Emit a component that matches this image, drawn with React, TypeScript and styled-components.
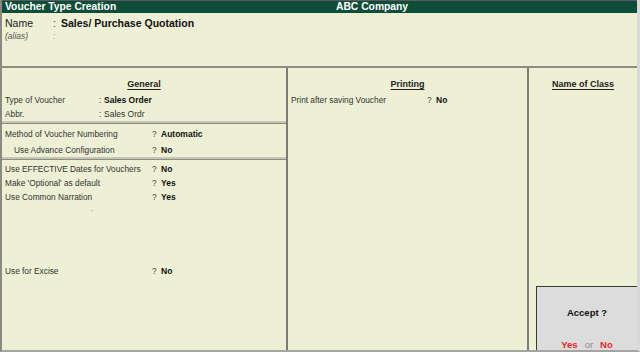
import styled, {createGlobalStyle} from 'styled-components'

const GlobalStyle = createGlobalStyle`
    html, body {
        margin: 0;
        padding: 0;
        background: #ffffff;
        overflow: hidden;
    }
    body {
        font-family: "Liberation Sans", Arial, sans-serif;
    }
`;

const Screen = styled.div`
    width: 640px;
    height: 352px;
    display: flex;
    flex-direction: column;
    box-sizing: border-box;
    background: #eef0d5;
    border-left: 2px solid #8a8a80;
    border-bottom: 2px solid #a4a4a0;
    border-right: 3px solid #d8d8d4;
    position: relative;
    overflow: hidden;
`;

const TitleBar = styled.div`
    height: 12px;
    display: flex;
    align-items: center;
    background: #0f4d3b;
    border-top: 1px solid #5a5a5a;
    color: #ffffff;
    font-weight: bold;
    font-size: 10.3px;
    line-height: 12px;
`;

const TitleText = styled.span<{ $width?: number }>`
    width: ${props => props.$width ? `${props.$width}px` : 'auto'};
    padding-left: 3px;
    white-space: nowrap;
`;

const NameSection = styled.div`
    height: 55px;
    padding: 3px 0 0 3px;
    box-sizing: border-box;
    border-bottom: 2px solid #8c8c80;
`;

const NameRow = styled.div<{ $small?: boolean }>`
    display: flex;
    align-items: center;
    height: ${props => props.$small ? 11 : 14}px;
    font-size: ${props => props.$small ? 8.5 : 10.5}px;
    color: ${props => props.$small ? '#555' : '#222'};
    font-style: ${props => props.$small ? 'italic' : 'normal'};
`;

const NameLabel = styled.span`
    width: 48px;
`;

const NameColon = styled.span<{ $faint?: boolean }>`
    width: 8px;
    color: ${props => props.$faint ? '#999' : '#444'};
`;

const NameValue = styled.span`
    font-weight: bold;
    font-size: 10.5px;
    color: #111;
`;

const Columns = styled.div`
    flex: 1;
    display: flex;
`;

const Column = styled.div<{ $width?: number }>`
    width: ${props => props.$width ? `${props.$width}px` : 'auto'};
    flex: ${props => props.$width ? 'none' : 1};
    display: flex;
    flex-direction: column;
    box-sizing: border-box;
    border-right: ${props => props.$width ? '2px solid #7c7c70' : 'none'};
    font-size: 8.3px;
    color: #333;
`;

const Heading = styled.div`
    margin-top: 9px;
    height: 14px;
    line-height: 14px;
    text-align: center;
    font-weight: bold;
    font-size: 9px;
    color: #222;
    span {
        text-decoration: underline;
        text-underline-offset: 2px;
    }
`;

const Block = styled.div<{ $top?: number, $line?: boolean }>`
    padding-top: ${props => props.$top ?? 0}px;
    border-bottom: ${props => props.$line ? '2px solid #c6c6b4' : 'none'};
    box-shadow: ${props => props.$line ? '0 1px 0 #8c8c80' : 'none'};
`;

const Row = styled.div<{ $height?: number, $indent?: number }>`
    height: ${props => props.$height ?? 14}px;
    display: flex;
    align-items: center;
    padding-left: ${props => 3 + (props.$indent ?? 0)}px;
    white-space: nowrap;
`;

const Label = styled.span<{ $width: number }>`
    width: ${props => props.$width}px;
    flex: none;
`;

const Mark = styled.span<{ $width?: number }>`
    width: ${props => props.$width ?? 9}px;
    color: #444;
`;

const Value = styled.span<{ $plain?: boolean }>`
    font-size: 8.5px;
    font-weight: ${props => props.$plain ? 'normal' : 'bold'};
    color: ${props => props.$plain ? '#333' : '#111'};
`;

const Dot = styled.div`
    height: 14px;
    padding-left: 89px;
    font-size: 9px;
    line-height: 8px;
    color: #888;
`;

const AcceptBox = styled.div`
    position: absolute;
    right: -1px;
    bottom: -1px;
    width: 102px;
    height: 65px;
    box-sizing: border-box;
    background: #dcdcdc;
    border: 1px solid #3a3a3a;
    display: flex;
    flex-direction: column;
    align-items: center;
    font-size: 9.5px;
`;

const AcceptTitle = styled.div`
    margin-top: 20px;
    font-weight: bold;
    color: #111;
`;

const AcceptChoices = styled.div`
    margin-top: 21px;
    display: flex;
    gap: 7px;
    align-items: baseline;
`;

const Choice = styled.span<{ $muted?: boolean }>`
    font-weight: ${props => props.$muted ? 'normal' : 'bold'};
    color: ${props => props.$muted ? '#8a8a8a' : '#e8262c'};
`;

type Field = { label: string, value: string };

const effective: Field[] = [
    {label: 'Use EFFECTIVE Dates for Vouchers', value: 'No'},
    {label: "Make 'Optional' as default", value: 'Yes'},
    {label: 'Use Common Narration', value: 'Yes'},
];

export default function App() {
    return (
        <>
            <GlobalStyle/>
            <Screen>
                <TitleBar>
                    <TitleText $width={328}>Voucher Type Creation</TitleText>
                    <TitleText>ABC Company</TitleText>
                </TitleBar>

                <NameSection>
                    <NameRow>
                        <NameLabel>Name</NameLabel>
                        <NameColon>:</NameColon>
                        <NameValue>Sales/ Purchase Quotation</NameValue>
                    </NameRow>
                    <NameRow $small>
                        <NameLabel>(alias)</NameLabel>
                        <NameColon $faint>:</NameColon>
                    </NameRow>
                </NameSection>

                <Columns>
                    <Column $width={286}>
                        <Heading><span>General</span></Heading>
                        <Block $top={2} $line>
                            <Row>
                                <Label $width={94}>Type of Voucher</Label>
                                <Mark $width={5}>:</Mark>
                                <Value>Sales Order</Value>
                            </Row>
                            <Row>
                                <Label $width={94}>Abbr.</Label>
                                <Mark $width={5}>:</Mark>
                                <Value $plain>Sales Ordr</Value>
                            </Row>
                        </Block>
                        <Block $top={2} $line>
                            <Row $height={18}>
                                <Label $width={147}>Method of Voucher Numbering</Label>
                                <Mark>?</Mark>
                                <Value>Automatic</Value>
                            </Row>
                            <Row $indent={9}>
                                <Label $width={138}>Use Advance Configuration</Label>
                                <Mark>?</Mark>
                                <Value>No</Value>
                            </Row>
                        </Block>
                        <Block $top={3}>
                            {effective.map((item, index) => (
                                <Row key={index}>
                                    <Label $width={147}>{item.label}</Label>
                                    <Mark>?</Mark>
                                    <Value>{item.value}</Value>
                                </Row>
                            ))}
                            <Dot>.</Dot>
                        </Block>
                        <Block $top={46}>
                            <Row>
                                <Label $width={147}>Use for Excise</Label>
                                <Mark>?</Mark>
                                <Value>No</Value>
                            </Row>
                        </Block>
                    </Column>

                    <Column $width={241}>
                        <Heading><span>Printing</span></Heading>
                        <Block $top={2}>
                            <Row>
                                <Label $width={136}>Print after saving Voucher</Label>
                                <Mark>?</Mark>
                                <Value>No</Value>
                            </Row>
                        </Block>
                    </Column>

                    <Column>
                        <Heading><span>Name of Class</span></Heading>
                    </Column>
                </Columns>

                <AcceptBox>
                    <AcceptTitle>Accept ?</AcceptTitle>
                    <AcceptChoices>
                        <Choice>Yes</Choice>
                        <Choice $muted>or</Choice>
                        <Choice>No</Choice>
                    </AcceptChoices>
                </AcceptBox>
            </Screen>
        </>
    )
}
